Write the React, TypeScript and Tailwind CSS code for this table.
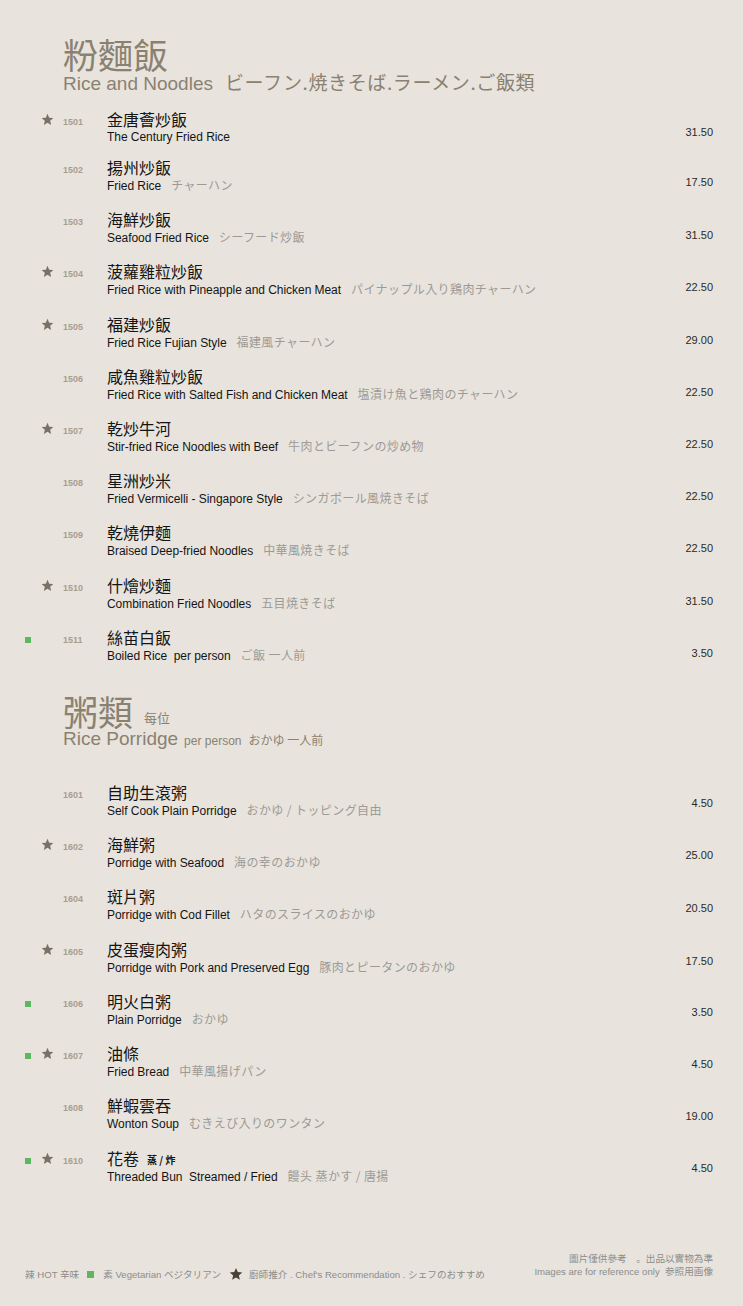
import React from "react";

type Item = {
  code: string;
  zh: string;
  zhSmall?: string;
  en: string;
  jp?: string;
  price: string;
  star?: boolean;
  veg?: boolean;
  h: string;
  pt: string;
};

const Star = ({ size, color }: { size: number; color: string }) => (
  <svg width={size} height={size} viewBox="0 0 24 24">
    <path
      d="M12 1.5l3.1 7.2 7.7.6-5.9 5.1 1.8 7.6L12 18l-6.7 4 1.8-7.6-5.9-5.1 7.7-.6z"
      fill={color}
    />
  </svg>
);

const rice: Item[] = [
  { code: "1501", star: true, zh: "金唐薈炒飯", en: "The Century Fried Rice", price: "31.50", h: "h-[48px]", pt: "mt-[15px]" },
  { code: "1502", zh: "揚州炒飯", en: "Fried Rice", jp: "チャーハン", price: "17.50", h: "h-[52.2px]", pt: "mt-[17px]" },
  { code: "1503", zh: "海鮮炒飯", en: "Seafood Fried Rice", jp: "シーフード炒飯", price: "31.50", h: "h-[52.2px]", pt: "mt-[18px]" },
  { code: "1504", star: true, zh: "菠蘿雞粒炒飯", en: "Fried Rice with Pineapple and Chicken Meat", jp: "パイナップル入り鶏肉チャーハン", price: "22.50", h: "h-[52.2px]", pt: "mt-[18px]" },
  { code: "1505", star: true, zh: "福建炒飯", en: "Fried Rice Fujian Style", jp: "福建風チャーハン", price: "29.00", h: "h-[52.2px]", pt: "mt-[18px]" },
  { code: "1506", zh: "咸魚雞粒炒飯", en: "Fried Rice with Salted Fish and Chicken Meat", jp: "塩漬け魚と鶏肉のチャーハン", price: "22.50", h: "h-[52.2px]", pt: "mt-[18px]" },
  { code: "1507", star: true, zh: "乾炒牛河", en: "Stir-fried Rice Noodles with Beef", jp: "牛肉とビーフンの炒め物", price: "22.50", h: "h-[52.2px]", pt: "mt-[18px]" },
  { code: "1508", zh: "星洲炒米", en: "Fried Vermicelli - Singapore Style", jp: "シンガポール風焼きそば", price: "22.50", h: "h-[52.2px]", pt: "mt-[18px]" },
  { code: "1509", zh: "乾燒伊麵", en: "Braised Deep-fried Noodles", jp: "中華風焼きそば", price: "22.50", h: "h-[52.2px]", pt: "mt-[18px]" },
  { code: "1510", star: true, zh: "什燴炒麵", en: "Combination Fried Noodles", jp: "五目焼きそば", price: "31.50", h: "h-[52.2px]", pt: "mt-[18px]" },
  { code: "1511", veg: true, zh: "絲苗白飯", en: "Boiled Rice\u00a0 per person", jp: "ご飯 一人前", price: "3.50", h: "h-[52px]", pt: "mt-[18px]" },
];

const porridge: Item[] = [
  { code: "1601", zh: "自助生滾粥", en: "Self Cook Plain Porridge", jp: "おかゆ / トッピング自由", price: "4.50", h: "h-[52.3px]", pt: "mt-[13px]" },
  { code: "1602", star: true, zh: "海鮮粥", en: "Porridge with Seafood", jp: "海の幸のおかゆ", price: "25.00", h: "h-[52.3px]", pt: "mt-[13px]" },
  { code: "1604", zh: "斑片粥", en: "Porridge with Cod Fillet", jp: "ハタのスライスのおかゆ", price: "20.50", h: "h-[52.3px]", pt: "mt-[14px]" },
  { code: "1605", star: true, zh: "皮蛋瘦肉粥", en: "Porridge with Pork and Preserved Egg", jp: "豚肉とピータンのおかゆ", price: "17.50", h: "h-[52.3px]", pt: "mt-[14px]" },
  { code: "1606", veg: true, zh: "明火白粥", en: "Plain Porridge", jp: "おかゆ", price: "3.50", h: "h-[52.3px]", pt: "mt-[13px]" },
  { code: "1607", veg: true, star: true, zh: "油條", en: "Fried Bread", jp: "中華風揚げパン", price: "4.50", h: "h-[52.3px]", pt: "mt-[13px]" },
  { code: "1608", zh: "鮮蝦雲吞", en: "Wonton Soup", jp: "むきえび入りのワンタン", price: "19.00", h: "h-[52.3px]", pt: "mt-[13px]" },
  { code: "1610", veg: true, star: true, zh: "花卷", zhSmall: "蒸 / 炸", en: "Threaded Bun\u00a0 Streamed / Fried", jp: "饅头 蒸かす / 唐揚", price: "4.50", h: "h-[52px]", pt: "mt-[12px]" },
];

const Row = ({ it }: { it: Item }) => (
  <div className={`flex ${it.h}`}>
    <div className="w-[16px] shrink-0">
      {it.veg && <div className="mt-[9px] w-[6px] h-[6px] bg-[#5cb860]" />}
    </div>
    <div className="w-[22px] shrink-0 pt-[3px]">
      {it.star && <Star size={13} color="#7a7165" />}
    </div>
    <div className="w-[44px] shrink-0 pt-[7px] text-[9px] leading-[10px] font-bold text-[#a89e8f] font-['Liberation_Sans',sans-serif]">
      {it.code}
    </div>
    <div className="flex-1 flex flex-col">
      <div className="flex items-end text-[16px] leading-[18px] text-[#141414] font-['Noto_Sans_CJK_TC','Noto_Sans_CJK_JP',sans-serif]">
        <span>{it.zh}</span>
        {it.zhSmall && (
          <span className="ml-[8px] text-[10px] leading-[14px] font-bold">{it.zhSmall}</span>
        )}
      </div>
      <div className="flex items-baseline mt-[1px] whitespace-nowrap">
        <span className="text-[12px] leading-[16px] tracking-[-0.05px] text-[#141414] font-['Liberation_Sans',sans-serif]">
          {it.en}
        </span>
        {it.jp && (
          <span className="ml-[10px] text-[12px] leading-[16px] tracking-[0.4px] text-[#9d9a96] font-['Noto_Sans_CJK_JP',sans-serif]">
            {it.jp}
          </span>
        )}
      </div>
    </div>
    <div className={`${it.pt} text-[11px] leading-[14px] text-[#2a2a2a] font-['Liberation_Sans',sans-serif] text-right`}>
      {it.price}
    </div>
  </div>
);

export default function App() {
  return (
    <div className="w-[743px] h-[1306px] bg-[#e8e4dd] flex flex-col pl-[25px] pr-[30px] pt-[36px]">
      {/* Section 1 */}
      <div className="pl-[38px] text-[#8a8171]">
        <div className="text-[35px] leading-[36px] font-['Noto_Sans_CJK_TC',sans-serif]">粉麵飯</div>
        <div className="text-[19px] leading-[20px] whitespace-nowrap font-['Liberation_Sans','Noto_Sans_CJK_JP',sans-serif]">
          <span>Rice and Noodles</span>
          <span className="ml-[12px] font-['Noto_Sans_CJK_JP',sans-serif] text-[19px] tracking-[0.6px]">ビーフン.焼きそば.ラーメン.ご飯類</span>
        </div>
      </div>
      <div className="mt-[16px] flex flex-col">
        {rice.map((it) => (
          <Row key={it.code} it={it} />
        ))}
      </div>

      {/* Section 2 */}
      <div className="mt-[13px] pl-[38px] text-[#8a8171]">
        <div className="flex items-end">
          <span className="text-[35px] leading-[36px] font-['Noto_Sans_CJK_TC',sans-serif]">粥類</span>
          <span className="ml-[11px] mb-[3px] text-[13px] leading-[16px] font-['Noto_Sans_CJK_TC',sans-serif]">每位</span>
        </div>
        <div className="whitespace-nowrap leading-[20px]">
          <span className="text-[19px] font-['Liberation_Sans',sans-serif]">Rice Porridge</span>
          <span className="ml-[6px] text-[12px] font-['Liberation_Sans',sans-serif]">per person</span>
          <span className="ml-[7px] text-[12px] font-['Noto_Sans_CJK_JP',sans-serif]">おかゆ 一人前</span>
        </div>
      </div>
      <div className="mt-[32px] flex flex-col">
        {porridge.map((it) => (
          <Row key={it.code} it={it} />
        ))}
      </div>

      {/* Footer */}
      <div className="mt-auto mb-[28px] flex items-end justify-between text-[9.6px] text-[#8c8c8c] font-['Liberation_Sans','Noto_Sans_CJK_JP',sans-serif]">
        <div className="flex items-center mb-[-3px] leading-[13px] whitespace-nowrap">
          <span>辣 HOT 辛味</span>
          <span className="ml-[8px] w-[7px] h-[7px] bg-[#5cb860]" />
          <span className="ml-[9px]">素 Vegetarian ベジタリアン</span>
          <span className="ml-[8px]">
            <Star size={14} color="#4a4236" />
          </span>
          <span className="ml-[6px]">廚師推介 . Chef's Recommendation . シェフのおすすめ</span>
        </div>
        <div className="flex flex-col items-end leading-[13px] whitespace-nowrap">
          <span>圖片僅供參考　。出品以實物為準</span>
          <span>Images are for reference only&nbsp; 参照用画像</span>
        </div>
      </div>
    </div>
  );
}
